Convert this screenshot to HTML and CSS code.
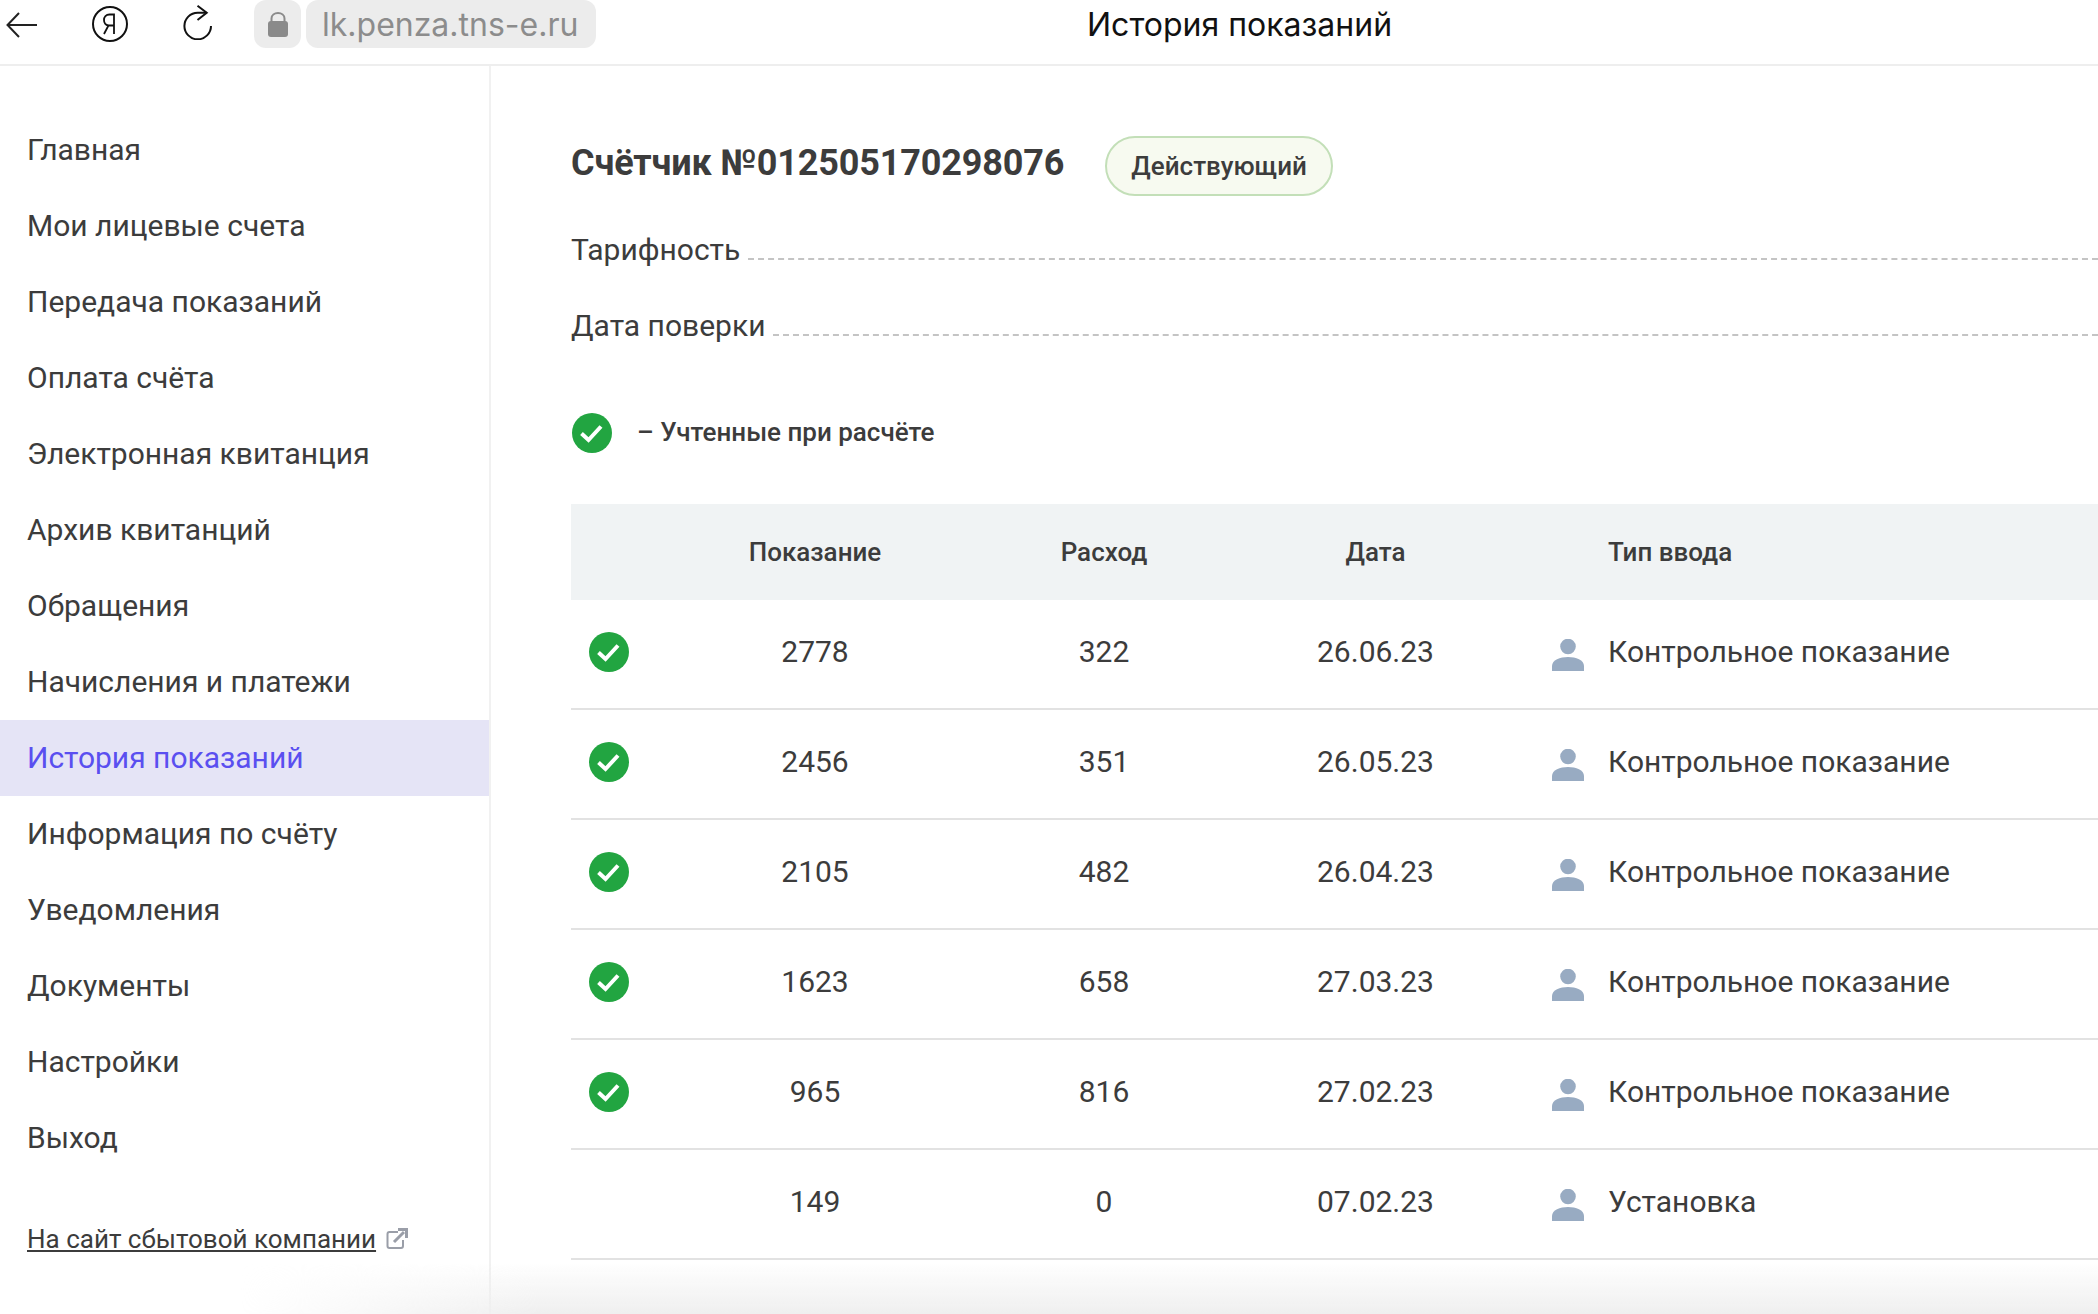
FILE: index.html
```html
<!DOCTYPE html>
<html lang="ru">

<head>
    <meta charset="UTF-8">
    <title>История показаний</title>
    <link rel="stylesheet" href="styles.css">
</head>

<body>
    <svg class="sprite" width="0" height="0">
        <symbol id="check" viewBox="0 0 40 40">
            <circle cx="20" cy="20" r="20" fill="#22a541" />
            <path d="M9.5 20.5 L16.5 27 L29 13.5" fill="none" stroke="#fff" stroke-width="4" />
        </symbol>
        <symbol id="person" viewBox="0 0 32 32">
            <circle cx="16" cy="7.500" r="7.800" fill="#98abc2" />
            <path d="M0 32 V27 C0 21 8 18 16 18 C24 18 32 21 32 27 V32 Z" fill="#98abc2" />
        </symbol>
    </svg>

    <header class="topbar">
        <svg class="back-icon" width="32" height="26" viewBox="0 0 32 26">
            <path d="M31 13 H2 M13 1 L1.5 13 L13 25" fill="none" stroke="#222" stroke-width="2" />
        </svg>
        <svg class="ya-icon" width="36" height="36" viewBox="0 0 36 36">
            <circle cx="18" cy="18" r="17" fill="none" stroke="#111" stroke-width="2" />
            <path d="M22 28 V8.500 H17.500 C14 8.500 12 11 12 14 C12 17 13.500 19 16.500 19.500 L12 28 M16.500 19.500 H22" fill="none" stroke="#111" stroke-width="1.800" />
        </svg>
        <svg class="reload-icon" width="32" height="36" viewBox="0 0 32 36">
            <path d="M26.500 8.700 H17.700 A13.300 13.300 0 1 0 31 22" fill="none" stroke="#111" stroke-width="2" />
            <path d="M17.500 1.700 L26.700 8.700 L17.500 16" fill="none" stroke="#111" stroke-width="2" />
        </svg>
        <div class="lock-box">
            <svg width="20" height="25" viewBox="0 0 20 25">
                <path d="M3.500 10 V6.500 C3.500 3 6.500 1 10 1 C13.500 1 16.500 3 16.500 6.500 V10" fill="none" stroke="#8a8a8a" stroke-width="2" />
                <rect x="0" y="9" width="20" height="16" rx="3" fill="#8a8a8a" />
            </svg>
        </div>
        <div class="url-box">lk.penza.tns-e.ru</div>
        <div class="page-title">История показаний</div>
    </header>

    <div class="wrap">
        <nav class="sidebar">
            <a class="nav-item">Главная</a>
            <a class="nav-item">Мои лицевые счета</a>
            <a class="nav-item">Передача показаний</a>
            <a class="nav-item">Оплата счёта</a>
            <a class="nav-item">Электронная квитанция</a>
            <a class="nav-item">Архив квитанций</a>
            <a class="nav-item">Обращения</a>
            <a class="nav-item">Начисления и платежи</a>
            <a class="nav-item active">История показаний</a>
            <a class="nav-item">Информация по счёту</a>
            <a class="nav-item">Уведомления</a>
            <a class="nav-item">Документы</a>
            <a class="nav-item">Настройки</a>
            <a class="nav-item">Выход</a>
            <div class="site-link">
                <a>На сайт сбытовой компании</a>
                <svg width="22" height="22" viewBox="0 0 22 22">
                    <path d="M12 4 H3.500 Q1.500 4 1.500 6 V18 Q1.500 20 3.500 20 H15 Q17 20 17 18 V12" fill="none" stroke="#9a9ea8" stroke-width="2" />
                    <path d="M8 14 L18 4 M12 1.500 H20.500 V10" fill="none" stroke="#9a9ea8" stroke-width="3" />
                </svg>
            </div>
        </nav>

        <main class="content">
            <div class="meter-head">
                <h1>Счётчик №012505170298076</h1>
                <span class="status">Действующий</span>
            </div>
            <div class="field"><span>Тарифность</span><i class="dots"></i></div>
            <div class="field"><span>Дата поверки</span><i class="dots"></i></div>
            <div class="legend">
                <svg width="40" height="40"><use href="#check" /></svg>
                <b>– Учтенные при расчёте</b>
            </div>

            <table class="readings">
                <colgroup>
                    <col class="col-check">
                    <col class="col-value">
                    <col class="col-usage">
                    <col class="col-date">
                    <col>
                </colgroup>
                <thead>
                    <tr>
                        <th></th>
                        <th>Показание</th>
                        <th>Расход</th>
                        <th>Дата</th>
                        <th class="type-head">Тип ввода</th>
                    </tr>
                </thead>
                <tbody>
                    <tr>
                        <td class="check-cell"><svg width="40" height="40"><use href="#check" /></svg></td>
                        <td>2778</td>
                        <td>322</td>
                        <td>26.06.23</td>
                        <td class="type-cell"><svg width="32" height="32"><use href="#person" /></svg>Контрольное показание</td>
                    </tr>
                    <tr>
                        <td class="check-cell"><svg width="40" height="40"><use href="#check" /></svg></td>
                        <td>2456</td>
                        <td>351</td>
                        <td>26.05.23</td>
                        <td class="type-cell"><svg width="32" height="32"><use href="#person" /></svg>Контрольное показание</td>
                    </tr>
                    <tr>
                        <td class="check-cell"><svg width="40" height="40"><use href="#check" /></svg></td>
                        <td>2105</td>
                        <td>482</td>
                        <td>26.04.23</td>
                        <td class="type-cell"><svg width="32" height="32"><use href="#person" /></svg>Контрольное показание</td>
                    </tr>
                    <tr>
                        <td class="check-cell"><svg width="40" height="40"><use href="#check" /></svg></td>
                        <td>1623</td>
                        <td>658</td>
                        <td>27.03.23</td>
                        <td class="type-cell"><svg width="32" height="32"><use href="#person" /></svg>Контрольное показание</td>
                    </tr>
                    <tr>
                        <td class="check-cell"><svg width="40" height="40"><use href="#check" /></svg></td>
                        <td>965</td>
                        <td>816</td>
                        <td>27.02.23</td>
                        <td class="type-cell"><svg width="32" height="32"><use href="#person" /></svg>Контрольное показание</td>
                    </tr>
                    <tr>
                        <td class="check-cell"></td>
                        <td>149</td>
                        <td>0</td>
                        <td>07.02.23</td>
                        <td class="type-cell"><svg width="32" height="32"><use href="#person" /></svg>Установка</td>
                    </tr>
                </tbody>
            </table>
        </main>
    </div>

    <div class="bottom-shade"></div>
</body>

</html>
```

FILE: styles.css
```css
html,
body {
    margin: 0;
    height: 100%;
    overflow: hidden;
}

body {
    font-family: Roboto, Arial, sans-serif;
    font-size: 30px;
    color: #3c3c3c;
    background: #fff;
}

.sprite {
    display: block;
}

.topbar {
    display: flex;
    align-items: flex-start;
    height: 64px;
    border-bottom: 2px solid #eeeeee;
}

.back-icon {
    margin: 12px 0 0 6px;
}

.ya-icon {
    margin: 6px 0 0 54px;
}

.reload-icon {
    margin: 4px 0 0 52px;
}

.lock-box {
    width: 47px;
    height: 48px;
    margin-left: 42px;
    background: #ececec;
    border-radius: 12px;
    display: flex;
    justify-content: center;
    align-items: center;
}

.url-box {
    width: 290px;
    box-sizing: border-box;
    height: 48px;
    line-height: 50px;
    margin-left: 5px;
    padding-left: 16px;
    background: #ececec;
    border-radius: 12px;
    color: #8c8c8c;
    font-family: Inter, Roboto, sans-serif;
    font-size: 32px;
    white-space: nowrap;
}

.page-title {
    margin-left: 491px;
    font-family: Inter, Roboto, sans-serif;
    font-size: 32px;
    line-height: 50px;
    color: #111;
}

.wrap {
    display: flex;
    height: 1248px;
}

.sidebar {
    width: 489px;
    flex: none;
    padding-top: 46px;
    border-right: 2px solid #f1f1f1;
}

.nav-item {
    display: block;
    height: 76px;
    line-height: 76px;
    padding-left: 27px;
}

.nav-item.active {
    background: #e5e4f6;
    color: #5a4ff0;
}

.site-link {
    display: flex;
    align-items: center;
    gap: 10px;
    margin: 48px 0 0 27px;
    font-size: 26px;
}

.site-link a {
    text-decoration: underline;
}

.content {
    flex: 1;
    min-width: 0;
    padding: 68px 0 0 80px;
}

.meter-head {
    display: flex;
    align-items: flex-start;
    gap: 41px;
    height: 57px;
}

h1 {
    margin: 0;
    font-size: 36px;
    line-height: 58px;
    font-weight: 700;
    letter-spacing: -0.15px;
}

.status {
    height: 56px;
    line-height: 56px;
    margin-top: 2px;
    padding: 0 24px;
    border: 2px solid #c3dfb8;
    border-radius: 30px;
    background: #f7faf0;
    font-size: 26px;
    font-weight: 500;
}

.field {
    display: flex;
    align-items: flex-end;
    gap: 8px;
    height: 76px;
}

.dots {
    flex: 1;
    margin-bottom: 7px;
    border-bottom: 2px dashed #c4c4c4;
}

.legend {
    display: flex;
    align-items: center;
    gap: 25px;
    margin: 70px 0 0 1px;
    font-size: 26px;
}

.legend b {
    position: relative;
    top: -1px;
    font-weight: 500;
}

.readings {
    width: 100%;
    margin-top: 51px;
    border-collapse: collapse;
    table-layout: fixed;
}

.col-check {
    width: 129px;
}

.col-value {
    width: 230px;
}

.col-usage {
    width: 348px;
}

.col-date {
    width: 195px;
}

th {
    height: 96px;
    padding: 0;
    background: #f0f3f4;
    font-size: 26px;
    font-weight: 500;
}

td {
    height: 102px;
    padding: 0 0 6px;
    text-align: center;
    border-bottom: 2px solid #e2e2e2;
}

td.check-cell {
    height: 104px;
    text-align: left;
    padding: 0 0 4px 18px;
}

.check-cell svg {
    display: block;
}

th.type-head {
    text-align: left;
    padding-left: 135px;
}

td.type-cell {
    height: 105px;
    text-align: left;
    padding: 0 0 3px 79px;
}

.type-cell svg {
    vertical-align: -9px;
    margin-right: 24px;
}

/* soft shadow from the window below */
.bottom-shade {
    position: fixed;
    left: 240px;
    right: 0;
    bottom: 0;
    height: 52px;
    background: linear-gradient(to top, #efefef, rgba(239, 239, 239, 0));
    -webkit-mask-image: linear-gradient(to right, transparent, #000 300px);
    mask-image: linear-gradient(to right, transparent, #000 300px);
}
```
